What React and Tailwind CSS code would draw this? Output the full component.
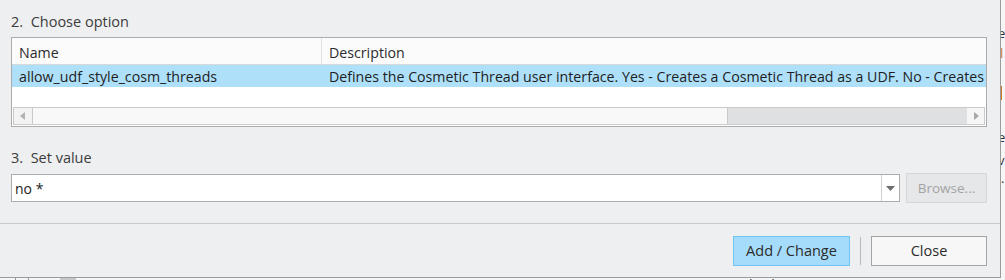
import React from 'react'

const FONT = { fontFamily: '"Open Sans", "Noto Sans", sans-serif' }

function LeftArrow() {
  return (
    <svg width="6" height="8" viewBox="0 0 6 8">
      <path d="M5 0 L5 8 L0 4 Z" fill="#b3b3b3" />
    </svg>
  )
}

function RightArrow() {
  return (
    <svg width="6" height="8" viewBox="0 0 6 8">
      <path d="M1 0 L1 8 L6 4 Z" fill="#a8a8a8" />
    </svg>
  )
}

function DownArrow() {
  return (
    <svg width="9" height="5" viewBox="0 0 9 5">
      <path d="M0 0 L9 0 L4.5 5 Z" fill="#6e6e6e" />
    </svg>
  )
}

function OptionTable() {
  return (
    <div className="mt-[6px] flex h-[90px] w-[976px] flex-col border border-[#acacac] bg-white">
      {/* header */}
      <div className="flex h-[27px] shrink-0 border-b border-[#d9d9d9] bg-[#fbfbfb] text-[14.2px] text-[#2b2b2b]">
        <div className="flex w-[310px] items-center border-r border-[#e3e3e3] pl-[7px] pt-[3px]">Name</div>
        <div className="flex flex-1 items-center pl-[7px] pt-[3px]">Description</div>
      </div>
      {/* selected row */}
      <div className="flex h-[22px] shrink-0 items-center overflow-hidden whitespace-nowrap bg-[#aee0fa] pt-px text-[14.2px] text-[#1e1e1e]">
        <div className="w-[310px] shrink-0 pl-[7px]">allow_udf_style_cosm_threads</div>
        <div className="pl-[7px]">
          Defines the Cosmetic Thread user interface. Yes - Creates a Cosmetic Thread as a UDF. No - Creates a Cosmetic Thread as a feature.
        </div>
      </div>
      <div className="flex-1" />
      {/* horizontal scrollbar */}
      <div className="mx-px mb-px flex h-[18px] shrink-0 border border-[#cacaca] bg-[#dfe0e2]">
        <div className="flex w-[18px] items-center justify-center bg-[#f3f3f3]">
          <LeftArrow />
        </div>
        <div className="w-[696px] border-x border-[#c9c9c9] bg-[#f8f8f8]" />
        <div className="flex-1" />
        <div className="flex w-[17px] items-center justify-center bg-[#f6f6f6]">
          <RightArrow />
        </div>
      </div>
    </div>
  )
}

export default function App() {
  return (
    <div className="flex h-[280px] w-[1005px] flex-col overflow-hidden bg-[#f6f6f6]" style={FONT}>
      <div className="flex h-[278px] shrink-0">
        {/* Dialog */}
        <div className="flex h-[278px] w-[1001px] shrink-0 flex-col border-r border-b border-[#9b9b9b] bg-[#eeeff1]">
          <div className="pl-[11px] pt-[11px]">
            <div className="h-[20px] whitespace-pre pt-px text-[14.5px] leading-[20px] text-[#3c3c3c]">2.  Choose option</div>
            <OptionTable />

            <div className="mt-[21px] h-[20px] whitespace-pre text-[14.5px] leading-[20px] text-[#3c3c3c]">3.  Set value</div>
            <div className="mt-[5px] flex w-[976px] items-center gap-[6px]">
              <div className="flex h-[28px] w-[889px] border border-[#acacac] bg-white">
                <div className="flex flex-1 items-center pl-[3px] text-[14px] text-[#222]">no *</div>
                <div className="flex w-[18px] items-center justify-center border-l border-[#cfcfcf]">
                  <DownArrow />
                </div>
              </div>
              <div className="flex h-[30px] w-[81px] items-center justify-center border border-[#d6d6d6] bg-[#e6e7e9] text-[13.5px] text-[#a3a3a3]">
                Browse...
              </div>
            </div>
          </div>

          <div className="mt-[20px] h-px w-full bg-[#c9c9c9]" />

          <div className="mt-[12px] flex items-center justify-end pr-[13px]">
            <div className="flex h-[30px] w-[117px] items-center justify-center border border-[#6fc5f4] bg-[#a6dcfb] text-[14.5px] text-[#2b2b2b]">
              Add / Change
            </div>
            <div className="mx-[10px] h-[28px] w-px bg-[#b9b9b9]" />
            <div className="flex h-[30px] w-[116px] items-center justify-center border border-[#a4a4a4] bg-[#f7f7f7] text-[14.5px] text-[#2b2b2b]">
              Close
            </div>
          </div>
        </div>

        {/* Underlying window peeking out on the right */}
        <div className="w-[4px] overflow-hidden text-[13px] leading-[18px] text-[#333]">
          <div className="-ml-[3px] pt-[24px]">e</div>
          <div className="-ml-[1px] mt-[2px] text-[#d07a28]">l</div>
          <div className="-ml-[1px] mt-[24px] h-[14px] w-[2px] bg-[#d07a28]" />
          <div className="-ml-[3px] mt-[28px]">e</div>
          <div className="-ml-[3px] mt-[5px]">v</div>
          <div className="mt-[0px]">.</div>
        </div>
      </div>

      {/* Underlying window peeking out at the bottom */}
      <div className="relative h-[2px] overflow-hidden text-[14px] text-[#333]">
        <div className="flex items-start">
          <div className="ml-[15px] h-[2px] w-px bg-[#999]" />
          <div className="ml-[12px] h-[2px] w-px bg-[#999]" />
          <div className="ml-[31px] h-[2px] w-[16px] bg-[#c8c8c8]" />
          <div className="-mt-[1px] ml-[10px] leading-[16px]">comment</div>
          <div className="-mt-[1px] ml-[560px] leading-[16px]">save_display yes</div>
        </div>
      </div>
    </div>
  )
}
